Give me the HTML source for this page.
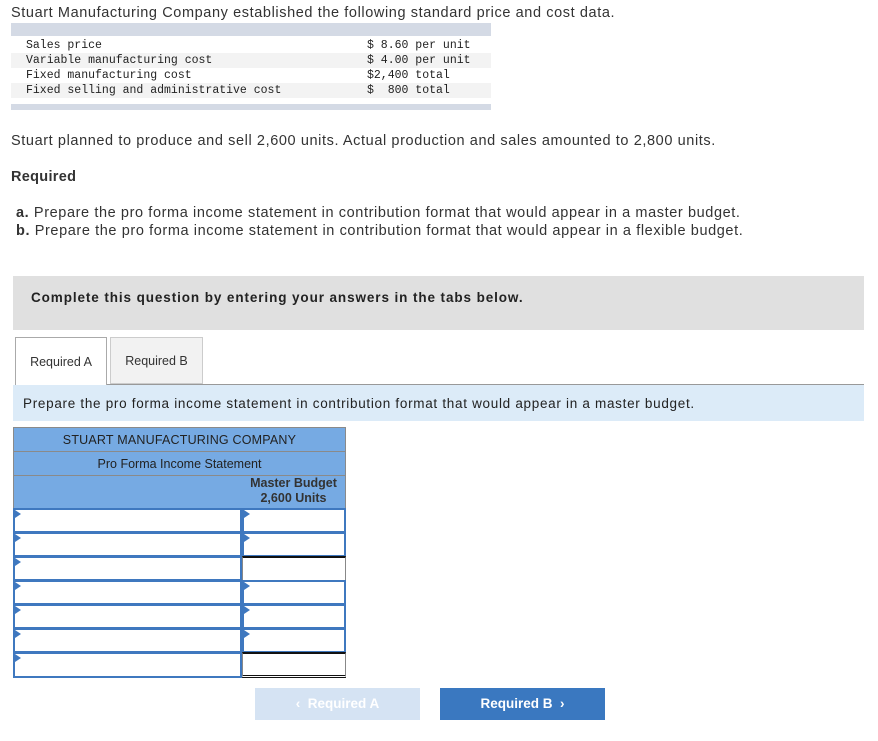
<!DOCTYPE html>
<html><head><style>
body{margin:0;width:878px;height:741px;background:#fff;font-family:"Liberation Sans",Arial,sans-serif;color:#333;position:relative;overflow:hidden}
.a{position:absolute}
.t{font-size:14.5px;letter-spacing:0.6px;white-space:nowrap}
.mono{font-family:"Liberation Mono",monospace;font-size:11.5px;color:#222;white-space:pre}
.hd{background:#76aae3;border:1px solid #8a8a8a;box-sizing:border-box;text-align:center;color:#222;font-size:12.5px}
.in{box-sizing:border-box;border:2px solid #3f78bf;background:#fff}
.tri{position:absolute;left:0;top:0;width:0;height:0;border-top:4px solid transparent;border-bottom:4px solid transparent;border-left:6px solid #3f78bf}
</style></head><body>
<div class="a t" style="left:11px;top:5px">Stuart Manufacturing Company established the following standard price and cost data.</div>
<div class="a" style="left:11px;top:23px;width:480px;height:13px;background:#d4dae5"></div>
<div class="a" style="left:11px;top:53px;width:480px;height:15px;background:#f3f3f3"></div>
<div class="a" style="left:11px;top:83px;width:480px;height:15px;background:#f3f3f3"></div>
<div class="a mono" style="left:26px;top:38px;line-height:15px">Sales price
Variable manufacturing cost
Fixed manufacturing cost
Fixed selling and administrative cost</div>
<div class="a mono" style="left:367px;top:38px;line-height:15px">$ 8.60 per unit
$ 4.00 per unit
$2,400 total
$  800 total</div>
<div class="a" style="left:11px;top:104px;width:480px;height:6px;background:#d4dae5"></div>
<div class="a t" style="left:11px;top:133px">Stuart planned to produce and sell 2,600 units. Actual production and sales amounted to 2,800 units.</div>
<div class="a t" style="left:11px;top:169px;font-weight:bold;letter-spacing:0.3px">Required</div>
<div class="a t" style="left:16px;top:204px;line-height:18px"><b>a.</b> Prepare the pro forma income statement in contribution format that would appear in a master budget.<br><b>b.</b> Prepare the pro forma income statement in contribution format that would appear in a flexible budget.</div>
<div class="a" style="left:13px;top:276px;width:851px;height:54px;background:#e0e0e0"></div>
<div class="a" style="left:31px;top:290px;font-size:13.5px;font-weight:bold;color:#222;letter-spacing:0.9px;white-space:nowrap">Complete this question by entering your answers in the tabs below.</div>
<div class="a" style="left:15px;top:337px;width:92px;height:48px;border:1px solid #aaa;border-bottom:none;background:#fff;box-sizing:border-box;font-size:12.5px;text-align:center;line-height:48px">Required A</div>
<div class="a" style="left:110px;top:337px;width:93px;height:47px;border:1px solid #ccc;background:#f2f2f2;box-sizing:border-box;font-size:12.5px;text-align:center;line-height:46px">Required B</div>
<div class="a" style="left:107px;top:384px;width:757px;height:1px;background:#999"></div>
<div class="a" style="left:13px;top:385px;width:851px;height:36px;background:#dcebf8"></div>
<div class="a" style="left:23px;top:396px;font-size:13.5px;color:#222;letter-spacing:0.7px;white-space:nowrap">Prepare the pro forma income statement in contribution format that would appear in a master budget.</div>
<div class="a hd" style="left:13px;top:427px;width:333px;height:25px;line-height:24px;letter-spacing:0.2px">STUART MANUFACTURING COMPANY</div>
<div class="a hd" style="left:13px;top:451px;width:333px;height:25px;line-height:24px">Pro Forma Income Statement</div>
<div class="a hd" style="left:13px;top:475px;width:333px;height:34px"></div>
<div class="a" style="left:242px;top:476px;width:103px;text-align:center;font-size:12.5px;font-weight:bold;line-height:15px;color:#333">Master Budget<br>2,600 Units</div>
<div class="a" style="left:13px;top:508px;width:333px;height:170px;background:#888"></div>
<div class="a in" style="left:13px;top:508px;width:229px;height:25px"><div class="tri"></div></div>
<div class="a in" style="left:242px;top:508px;width:104px;height:25px"><div class="tri"></div></div>
<div class="a in" style="left:13px;top:532px;width:229px;height:25px"><div class="tri"></div></div>
<div class="a in" style="left:242px;top:532px;width:104px;height:25px"><div class="tri"></div></div>
<div class="a in" style="left:13px;top:556px;width:229px;height:25px"><div class="tri"></div></div>
<div class="a" style="left:242px;top:556px;width:104px;height:25px;background:#fff;border-top:2px solid #111;border-left:1px solid #888;border-right:1px solid #888;box-sizing:border-box"></div>
<div class="a in" style="left:13px;top:580px;width:229px;height:25px"><div class="tri"></div></div>
<div class="a in" style="left:242px;top:580px;width:104px;height:25px"><div class="tri"></div></div>
<div class="a in" style="left:13px;top:604px;width:229px;height:25px"><div class="tri"></div></div>
<div class="a in" style="left:242px;top:604px;width:104px;height:25px"><div class="tri"></div></div>
<div class="a in" style="left:13px;top:628px;width:229px;height:25px"><div class="tri"></div></div>
<div class="a in" style="left:242px;top:628px;width:104px;height:25px"><div class="tri"></div></div>
<div class="a in" style="left:13px;top:652px;width:229px;height:26px"><div class="tri"></div></div>
<div class="a" style="left:242px;top:652px;width:104px;height:26px;background:#fff;border-top:2px solid #111;border-bottom:3px double #111;border-left:1px solid #888;border-right:1px solid #888;box-sizing:border-box"></div>
<div class="a" style="left:255px;top:688px;width:165px;height:32px;background:#d5e3f3;color:#fff;font-size:13.5px;font-weight:bold;text-align:center;line-height:32px">&lsaquo;&nbsp; Required A</div>
<div class="a" style="left:440px;top:688px;width:165px;height:32px;background:#3a78c0;color:#fff;font-size:13.5px;font-weight:bold;text-align:center;line-height:32px">Required B &nbsp;&rsaquo;</div>
</body></html>
